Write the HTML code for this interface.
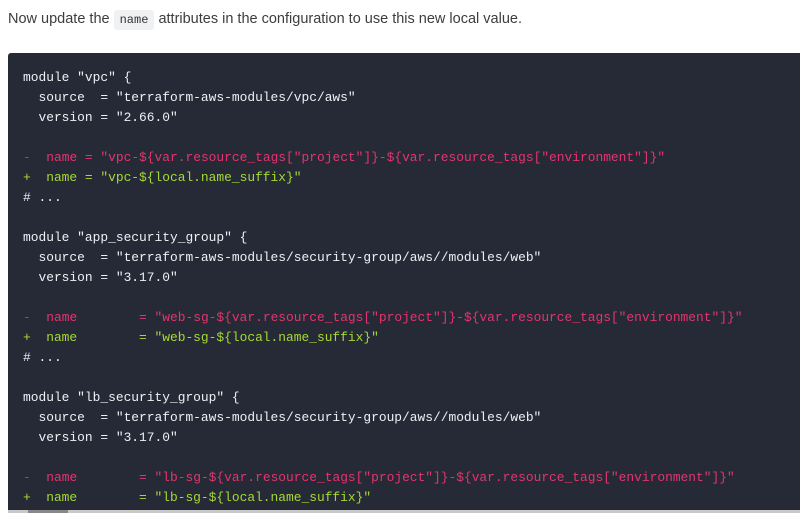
<!DOCTYPE html>
<html><head><style>
html,body{margin:0;padding:0;background:#fff;width:800px;height:513px;overflow:hidden}
p{position:absolute;left:8px;top:9px;margin:0;font:14.5px/20px "Liberation Sans",sans-serif;color:#3d3d3d;white-space:nowrap}
code.c{font:12px "Liberation Mono",monospace;background:#f0f1f3;padding:3px 6px;border-radius:3px;color:#333}
pre{position:absolute;left:8px;top:53px;width:800px;height:460px;margin:0;box-sizing:border-box;background:#262a36;color:#eef0f4;font:12.9px/20px "Liberation Mono",monospace;padding:15px 0 0 15px;border-radius:3px 0 0 0}
.r{color:#e3356d}.rd{color:#b73a5f}.g{color:#a6d934}
.sb{position:absolute;left:8px;top:510px;width:792px;height:3px;background:#c8c8c8}
.sb i{position:absolute;left:20px;top:0;width:40px;height:3px;background:#888}
</style></head><body>
<p>Now update the <code class="c">name</code> attributes in the configuration to use this new local value.</p>
<pre>module "vpc" {
  source  = "terraform-aws-modules/vpc/aws"
  version = "2.66.0"

<span class="rd">-</span>  <span class="r">name = "vpc-${var.resource_tags["project"]}-${var.resource_tags["environment"]}"</span>
<span class="g">+  name = "vpc-${local.name_suffix}"</span>
# ...

module "app_security_group" {
  source  = "terraform-aws-modules/security-group/aws//modules/web"
  version = "3.17.0"

<span class="rd">-</span>  <span class="r">name        = "web-sg-${var.resource_tags["project"]}-${var.resource_tags["environment"]}"</span>
<span class="g">+  name        = "web-sg-${local.name_suffix}"</span>
# ...

module "lb_security_group" {
  source  = "terraform-aws-modules/security-group/aws//modules/web"
  version = "3.17.0"

<span class="rd">-</span>  <span class="r">name        = "lb-sg-${var.resource_tags["project"]}-${var.resource_tags["environment"]}"</span>
<span class="g">+  name        = "lb-sg-${local.name_suffix}"</span>
</pre>
<div class="sb"><i></i></div>
</body></html>
